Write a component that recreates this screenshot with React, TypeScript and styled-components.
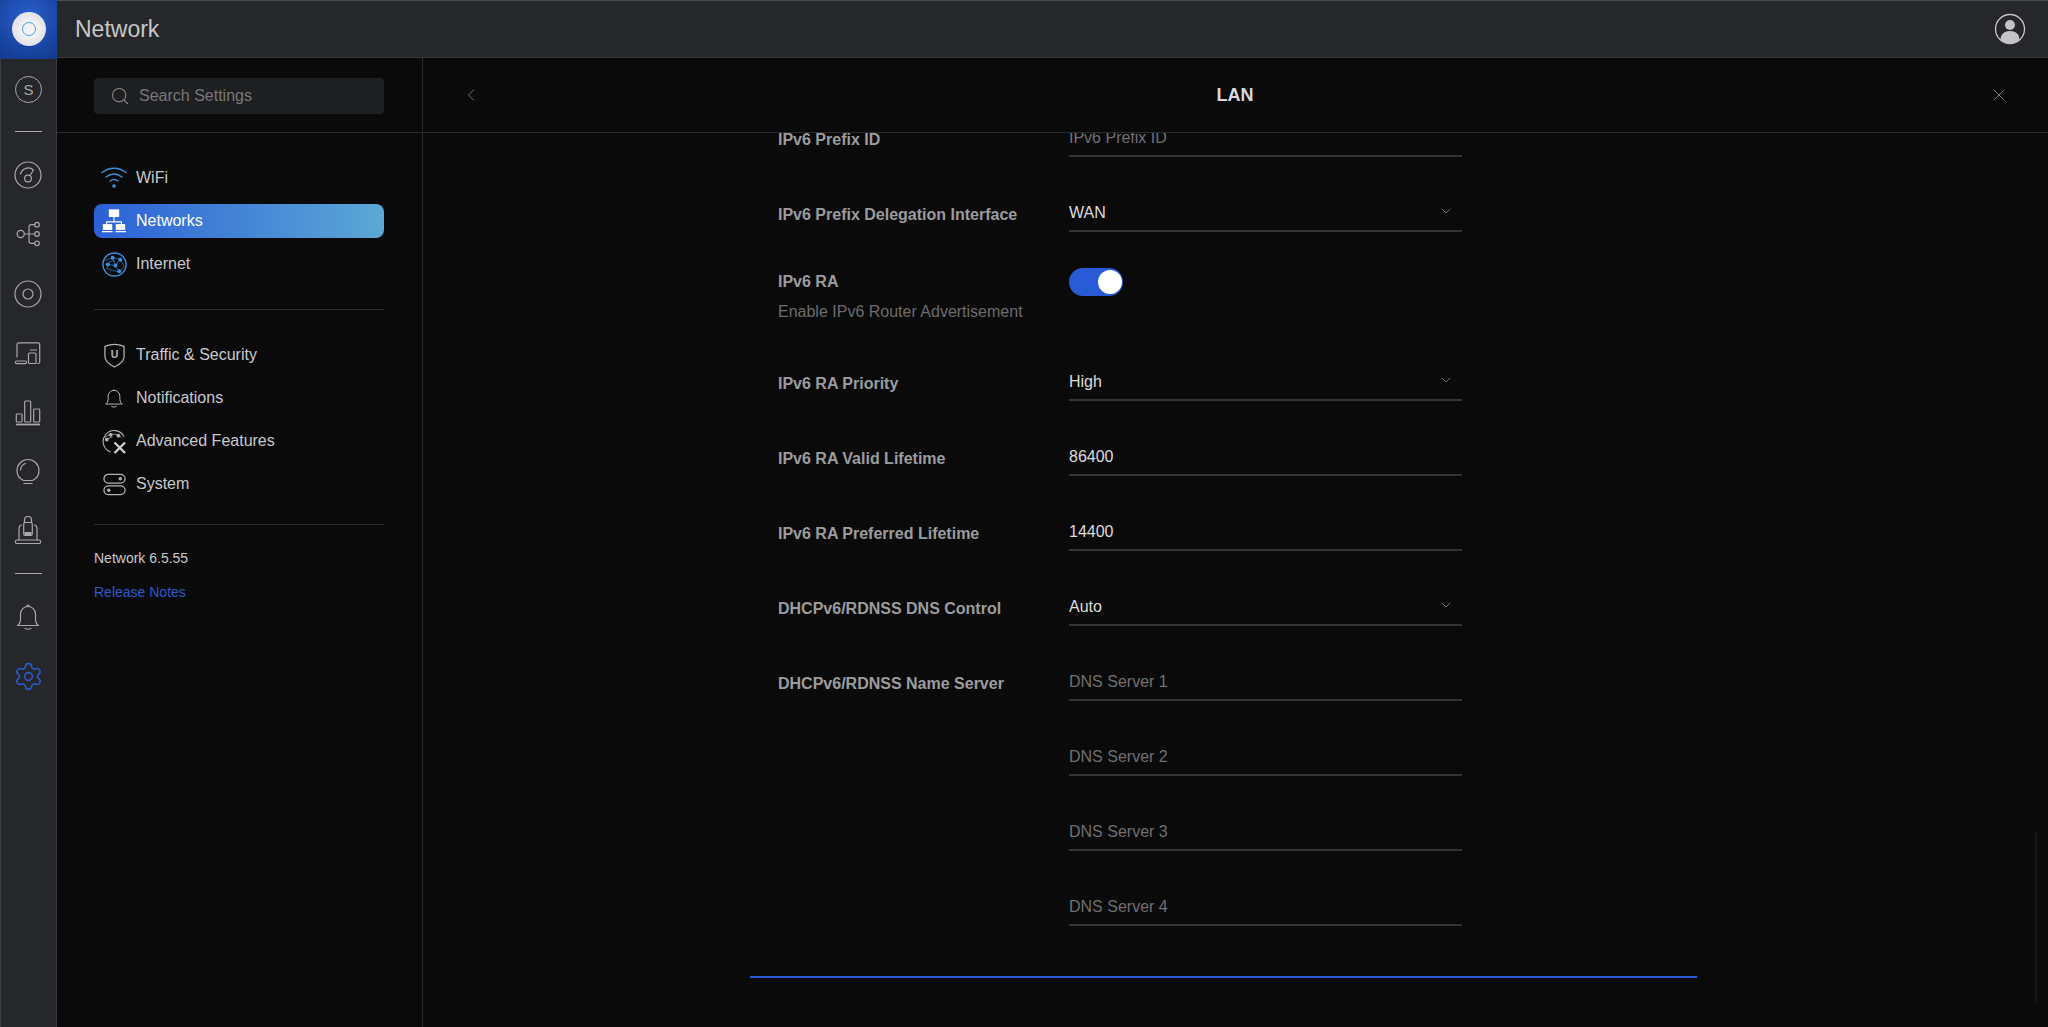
import React from 'react';
import styled, { createGlobalStyle } from 'styled-components';
import { ChevronDown, ChevronLeft, Search, Settings, X } from 'lucide-react';

const GlobalStyle = createGlobalStyle`
  html, body {
    margin: 0;
    height: 100%;
    background: #0a0a0b;
    font-family: "Liberation Sans", Arial, sans-serif;
  }
`;

const RailGlyph: React.FC<{ children: React.ReactNode }> = ({ children }) => (
  <RailSvg width="28" height="30" viewBox="0 0 28 30" fill="none" stroke="#a8a8aa" strokeWidth="1.2" strokeLinecap="round" strokeLinejoin="round">
    {children}
  </RailSvg>
);

const railTop = [
  <>
    <circle cx="14" cy="15" r="13" />
    <path d="M6.5 14a8 8 0 0 1 13-4l-3.500 5.500" />
    <circle cx="14" cy="18.500" r="3.400" />
  </>,
  <>
    <circle cx="6.700" cy="15" r="3.600" />
    <path d="M10.300 15H20.500M15 15V8q0-2.300 2.300-2.300H20.700M15 15v7q0 2.300 2.300 2.300H20.700" />
    <circle cx="23" cy="5.700" r="2.300" />
    <circle cx="23" cy="15" r="2.300" />
    <circle cx="23" cy="24.300" r="2.300" />
  </>,
  <>
    <circle cx="14" cy="15" r="13" />
    <circle cx="14" cy="15" r="5" />
  </>,
  <>
    <path d="M3 19V6.500q0-1.700 1.700-1.700H24q1.700 0 1.700 1.700V24q0 1.500-1.500 1.500H23.500" />
    <rect x="1.500" y="23" width="11" height="2.600" rx="1" />
    <rect x="14.500" y="15" width="7.500" height="10.500" rx="1" />
    <path d="M16.500 12h6" />
  </>,
  <>
    <rect x="2.300" y="16" width="5.700" height="8" rx="0.800" />
    <rect x="10.700" y="3" width="6" height="21" rx="1" />
    <rect x="19.700" y="11" width="6" height="13" rx="0.800" />
    <path d="M2 26.500h24" strokeWidth="1.800" strokeLinecap="butt" />
  </>,
  <>
    <path d="M9.500 23.500C5.500 21.800 3 18 3 13.500a11 11 0 0 1 22 0c0 4.500-2.500 8.300-6.500 10z" />
    <path d="M6.500 13a7.500 7.500 0 0 1 5-6.500" />
    <path d="M10 26.500h8" />
  </>,
  <>
    <rect x="9.700" y="6.500" width="8.600" height="13" rx="1.500" />
    <path d="M10.500 6.500V4a3.500 3.500 0 0 1 7 0v2.500" />
    <path d="M5 24V12q0-2.500 2.500-3M23 24V12q0-2.500-2.500-3" />
    <path d="M10.500 16h7v3.500h-7z" fill="#a8a8aa" stroke="none" />
    <rect x="1.500" y="24" width="25" height="3.500" rx="1.300" />
  </>,
];

const App: React.FC = () => (
  <Page>
    <GlobalStyle />
    <Rail>
      <LogoTile>
        <LogoDisc>
          <LogoRing />
        </LogoDisc>
      </LogoTile>
      <RailItem>
        <SiteBadge>S</SiteBadge>
      </RailItem>
      <RailDivider />
      {railTop.map((glyph, i) => (
        <RailItem key={i}>
          <RailGlyph>{glyph}</RailGlyph>
        </RailItem>
      ))}
      <RailDivider />
      <RailItem>
        <RailGlyph>
          <path d="M3.500 23.500q3-2 3-6.500v-5a7.500 7.500 0 0 1 15 0v5q0 4.500 3 6.500z" />
          <path d="M12.800 4q1.200-2.500 2.400 0M11 26.500q3 1.500 6 0" />
        </RailGlyph>
      </RailItem>
      <RailItem>
        <Settings size={31} color="#2a5ad0" strokeWidth={1.2} />
      </RailItem>
    </Rail>
    <Column>
      <TopBar>
        <AppTitle>Network</AppTitle>
        <svg width="32" height="32" viewBox="0 0 32 32" fill="none">
          <circle cx="16" cy="16" r="14.500" stroke="#c4c4c6" strokeWidth="1.300" />
          <circle cx="16" cy="12" r="5" fill="#c4c4c6" />
          <path d="M6.500 27c0-6 4-9 9.500-9s9.500 3 9.500 9q-4 3.500-9.500 3.500T6.500 27z" fill="#c4c4c6" />
        </svg>
      </TopBar>
      <Body>
        <Sidebar>
          <SearchSection>
            <SearchBox>
              <Search size={20} color="#8b8b8d" strokeWidth={1.3} />
              <SearchPlaceholder>Search Settings</SearchPlaceholder>
            </SearchBox>
          </SearchSection>
          <NavGroup $top={28} $bottom={28}>
            <NavItem>
              <NavIcon>
                <svg width="26" height="24" viewBox="0 0 26 24" fill="none" stroke="#3f93dd" strokeWidth="1.400" strokeLinecap="round">
                  <path d="M1 6.500Q13-2 25 6.500" />
                  <path d="M5 11q8-6 16 0" />
                  <path d="M9 15q4-3 8 0" />
                  <circle cx="13" cy="20" r="1.800" fill="#3f93dd" stroke="none" />
                </svg>
              </NavIcon>
              WiFi
            </NavItem>
            <NavItem $active>
              <NavIcon>
                <svg width="24" height="24" viewBox="0 0 26 26" fill="none" stroke="#fff" strokeWidth="1.200">
                  <rect x="8" y="1" width="10" height="7" fill="#fff" />
                  <path d="M13 8v6M5 17v-3h16v3" />
                  <rect x="1.500" y="17" width="9" height="5" fill="#fff" />
                  <rect x="15.500" y="17" width="9" height="5" fill="#fff" />
                  <path d="M0 24.500h11.500M14.500 24.500H26" strokeWidth="1.500" />
                </svg>
              </NavIcon>
              Networks
            </NavItem>
            <NavItem>
              <NavIcon>
                <svg width="25" height="25" viewBox="0 0 26 26" fill="none" stroke="#3f8fdb" strokeWidth="1.200">
                  <circle cx="13" cy="13" r="12" strokeWidth="1.500" />
                  <path d="M3 9l8-3 8 1 4 8-5 6-7-2-6-2 3-7 5-1M11 6l3 8 4 7M19 7l-5 7-8-1" stroke="#2d6fb5" strokeWidth="0.900" />
                  <circle cx="11" cy="6" r="1.500" fill="#3f8fdb" />
                  <circle cx="19" cy="8" r="1.500" fill="#3f8fdb" />
                  <circle cx="14" cy="14" r="1.500" fill="#3f8fdb" />
                  <circle cx="18" cy="20" r="1.500" fill="#3f8fdb" />
                  <circle cx="6" cy="13" r="1.500" fill="#3f8fdb" />
                </svg>
              </NavIcon>
              Internet
            </NavItem>
          </NavGroup>
          <NavGroup $top={28} $bottom={23}>
            <NavItem>
              <NavIcon>
                <svg width="23" height="25" viewBox="0 0 24 26" fill="none" stroke="#b4b4b6" strokeWidth="1.300">
                  <path d="M2 3.500Q12-.5 22 3.500V14q0 6-10 11Q2 20 2 14z" />
                  <text x="12" y="16" textAnchor="middle" fontSize="11" fontWeight="700" fill="#b4b4b6" stroke="none" fontFamily="Liberation Sans">U</text>
                </svg>
              </NavIcon>
              Traffic &amp; Security
            </NavItem>
            <NavItem>
              <NavIcon>
                <svg width="18" height="20" viewBox="0 0 20 22" fill="none" stroke="#b4b4b6" strokeWidth="1.100" strokeLinecap="round">
                  <path d="M1 17.500q2.500-1.500 2.500-5V9a6.500 6.500 0 0 1 13 0v3.500q0 3.500 2.500 5z" />
                  <path d="M9 2.500q1-2 2 0M7.500 20.500q2.500 1.500 5 0" />
                </svg>
              </NavIcon>
              Notifications
            </NavItem>
            <NavItem>
              <NavIcon>
                <svg width="25" height="25" viewBox="0 0 26 26" fill="none" stroke="#b4b4b6" strokeWidth="1.100">
                  <path d="M23 8A11.500 11.500 0 1 0 9 24" />
                  <path d="M3 9l6-4 8 1 3 3M4 11l7-3" strokeWidth="0.800" />
                  <circle cx="9" cy="6" r="1.400" fill="#b4b4b6" />
                  <circle cx="17" cy="7" r="1.400" fill="#b4b4b6" />
                  <circle cx="5" cy="11" r="1.400" fill="#b4b4b6" />
                  <path d="M13 14l11 11M24 14L13 25" strokeWidth="2.400" stroke="#d0d0d2" />
                </svg>
              </NavIcon>
              Advanced Features
            </NavItem>
            <NavItem>
              <NavIcon>
                <svg width="23" height="23" viewBox="0 0 24 24" fill="none" stroke="#b4b4b6" strokeWidth="1.300">
                  <rect x="1" y="1.500" width="22" height="9" rx="4.500" />
                  <rect x="1" y="13.500" width="22" height="9" rx="4.500" />
                  <circle cx="18" cy="6" r="1.800" fill="#b4b4b6" stroke="none" />
                  <circle cx="6" cy="18" r="1.800" fill="#b4b4b6" stroke="none" />
                </svg>
              </NavIcon>
              System
            </NavItem>
          </NavGroup>
          <VersionBlock>
            <VersionText>Network 6.5.55</VersionText>
            <ReleaseLink>Release Notes</ReleaseLink>
          </VersionBlock>
        </Sidebar>
        <Main>
          <MainHeader>
            <ChevronLeft size={20} color="#6f6f71" strokeWidth={1.200} />
            <PanelTitle>LAN</PanelTitle>
            <X size={20} color="#8a8a8c" strokeWidth={1.100} />
          </MainHeader>
          <Scroller>
            <Form>
              <Row>
                <Label>IPv6 Prefix ID</Label>
                <Field>
                  <Placeholder>IPv6 Prefix ID</Placeholder>
                </Field>
              </Row>
              <Row>
                <Label>IPv6 Prefix Delegation Interface</Label>
                <Field>
                  <Value>WAN</Value>
                  <SelectArrow size={16} strokeWidth={1.200} />
                </Field>
              </Row>
              <ToggleRow>
                <div>
                  <ToggleLabel>IPv6 RA</ToggleLabel>
                  <Description>Enable IPv6 Router Advertisement</Description>
                </div>
                <Toggle>
                  <Knob />
                </Toggle>
              </ToggleRow>
              <Row>
                <Label>IPv6 RA Priority</Label>
                <Field>
                  <Value>High</Value>
                  <SelectArrow size={16} strokeWidth={1.200} />
                </Field>
              </Row>
              <Row>
                <Label>IPv6 RA Valid Lifetime</Label>
                <Field>
                  <Value>86400</Value>
                </Field>
              </Row>
              <Row>
                <Label>IPv6 RA Preferred Lifetime</Label>
                <Field>
                  <Value>14400</Value>
                </Field>
              </Row>
              <Row>
                <Label>DHCPv6/RDNSS DNS Control</Label>
                <Field>
                  <Value>Auto</Value>
                  <SelectArrow size={16} strokeWidth={1.200} />
                </Field>
              </Row>
              <Row>
                <Label>DHCPv6/RDNSS Name Server</Label>
                <Field>
                  <Placeholder>DNS Server 1</Placeholder>
                </Field>
              </Row>
              {['DNS Server 2', 'DNS Server 3', 'DNS Server 4'].map((name) => (
                <Row key={name}>
                  <span />
                  <Field>
                    <Placeholder>{name}</Placeholder>
                  </Field>
                </Row>
              ))}
              <FormEnd />
            </Form>
            <ScrollThumb />
          </Scroller>
        </Main>
      </Body>
    </Column>
  </Page>
);

const Page = styled.div`
  display: flex;
  height: 100vh;
  overflow: hidden;
  background: #0a0a0b;
`;

const Rail = styled.nav`
  width: 55px;
  flex-shrink: 0;
  background: #26272a;
  border-left: 1px solid #3a3b3e;
  border-right: 1px solid #3a3b3e;
  display: flex;
  flex-direction: column;
  align-items: center;
`;

const RailSvg = styled.svg`
  margin-left: -1px;
`;

const LogoTile = styled.div`
  width: 57px;
  height: 59px;
  margin: 0 -1px 1px;
  flex-shrink: 0;
  display: flex;
  align-items: center;
  justify-content: center;
  background: radial-gradient(circle at 50% 30%, #2a62cf 0%, #1a47a6 60%, #123a8c 100%);
`;

const LogoDisc = styled.div`
  width: 34px;
  height: 34px;
  margin-bottom: 2px;
  border-radius: 50%;
  display: flex;
  align-items: center;
  justify-content: center;
  background: radial-gradient(circle, #f2f3f5 30%, #d3d5da 100%);
`;

const LogoRing = styled.div`
  width: 12px;
  height: 12px;
  border-radius: 50%;
  border: 1.5px solid #4f9be8;
`;

const RailItem = styled.div`
  width: 100%;
  height: 59.4px;
  flex-shrink: 0;
  display: flex;
  align-items: center;
  justify-content: center;
`;

const RailDivider = styled.div`
  width: 27px;
  height: 1px;
  margin: 12px 0 13px;
  flex-shrink: 0;
  background: #a8a8aa;
`;

const SiteBadge = styled.div`
  width: 25px;
  height: 25px;
  border: 1.2px solid #a8a8aa;
  border-radius: 50%;
  display: flex;
  align-items: center;
  justify-content: center;
  color: #a8a8aa;
  font-size: 15px;
`;

const Column = styled.div`
  flex: 1;
  min-width: 0;
  display: flex;
  flex-direction: column;
`;

const TopBar = styled.header`
  height: 58px;
  flex-shrink: 0;
  box-sizing: border-box;
  display: flex;
  align-items: center;
  justify-content: space-between;
  padding: 0 22px 0 18px;
  background: #26272a;
  border-top: 1px solid #4a4b4e;
  border-bottom: 1px solid #3a3b3e;
`;

const AppTitle = styled.div`
  color: #c6c6c8;
  font-size: 23px;
`;

const Body = styled.div`
  flex: 1;
  min-height: 0;
  display: flex;
`;

const Sidebar = styled.aside`
  width: 366px;
  box-sizing: border-box;
  flex-shrink: 0;
  border-right: 1px solid #2a2b2d;
`;

const SearchSection = styled.div`
  height: 75px;
  padding: 20px 38px 0 37px;
  box-sizing: border-box;
  border-bottom: 1px solid #2a2b2d;
`;

const SearchBox = styled.div`
  height: 36px;
  display: flex;
  align-items: center;
  gap: 9px;
  padding-left: 16px;
  border-radius: 4px;
  background: #1e1f21;
`;

const SearchPlaceholder = styled.span`
  color: #77777a;
  font-size: 16px;
`;

const NavGroup = styled.div<{ $top: number; $bottom: number }>`
  display: flex;
  flex-direction: column;
  gap: 9.1px;
  margin: 0 38px 0 37px;
  padding: ${({ $top }) => $top}px 0 ${({ $bottom }) => $bottom}px;
  border-bottom: 1px solid #2a2b2d;
`;

const NavItem = styled.div<{ $active?: boolean }>`
  height: 34px;
  display: flex;
  align-items: center;
  gap: 7px;
  padding-left: 5px;
  border-radius: 8px;
  font-size: 16px;
  color: ${({ $active }) => ($active ? '#ffffff' : '#c9c9cb')};
  background: ${({ $active }) =>
    $active ? 'linear-gradient(90deg, #2b60d6 0%, #5ca8d6 100%)' : 'transparent'};
`;

const NavIcon = styled.span`
  width: 30px;
  height: 30px;
  flex-shrink: 0;
  display: flex;
  align-items: center;
  justify-content: center;
`;

const VersionBlock = styled.div`
  display: flex;
  flex-direction: column;
  gap: 18px;
  padding: 25px 37px 0;
  font-size: 14px;
  line-height: 16px;
`;

const VersionText = styled.span`
  color: #c9c9cb;
`;

const ReleaseLink = styled.a`
  color: #2a5ad0;
`;

const Main = styled.main`
  flex: 1;
  min-width: 0;
  display: flex;
  flex-direction: column;
`;

const MainHeader = styled.div`
  height: 75px;
  flex-shrink: 0;
  box-sizing: border-box;
  display: flex;
  align-items: center;
  justify-content: space-between;
  padding: 0 39px 0 38px;
  border-bottom: 1px solid #2a2b2d;
`;

const PanelTitle = styled.h1`
  margin: 0;
  color: #d8d8da;
  font-size: 18px;
  font-weight: 700;
`;

const Scroller = styled.div`
  position: relative;
  flex: 1;
  min-height: 0;
  overflow: hidden;
  padding-left: 327px;
`;

const Form = styled.div`
  width: 947px;
  margin-top: -12px;
`;

const Row = styled.div`
  display: grid;
  grid-template-columns: 291px 393px;
  padding-left: 28px;
  margin-bottom: 39px;
`;

const ToggleRow = styled(Row)`
  height: 58px;
  margin-top: -3px;
`;

const Label = styled.div`
  height: 36px;
  padding-top: 2px;
  box-sizing: border-box;
  color: #9c9c9e;
  font-size: 16px;
  font-weight: 700;
  line-height: 34px;
`;

const ToggleLabel = styled.div`
  color: #9c9c9e;
  font-size: 16px;
  font-weight: 700;
  line-height: 28px;
`;

const Description = styled.div`
  margin-top: 4px;
  color: #6c6c6e;
  font-size: 16px;
  line-height: 24px;
`;

const Field = styled.div`
  height: 36px;
  box-sizing: border-box;
  display: flex;
  align-items: center;
  justify-content: space-between;
  padding-right: 8px;
  border-bottom: 2px solid #333335;
`;

const SelectArrow = styled(ChevronDown)`
  color: #8a8a8c;
  margin-bottom: 4px;
`;

const Value = styled.span`
  color: #dcdcde;
  font-size: 16px;
`;

const Placeholder = styled.span`
  color: #707072;
  font-size: 16px;
`;

const Toggle = styled.div`
  width: 54px;
  height: 28px;
  box-sizing: border-box;
  display: flex;
  justify-content: flex-end;
  align-items: center;
  padding-right: 1px;
  border-radius: 14px;
  background: #2a5bd7;
`;

const Knob = styled.div`
  width: 24px;
  height: 24px;
  border-radius: 50%;
  background: #ffffff;
`;

const FormEnd = styled.div`
  height: 2px;
  margin-top: 50px;
  background: #2a5bd7;
`;

const ScrollThumb = styled.div`
  position: absolute;
  top: 699px;
  right: 11px;
  width: 2px;
  height: 171px;
  background: #161617;
`;

export default App;
